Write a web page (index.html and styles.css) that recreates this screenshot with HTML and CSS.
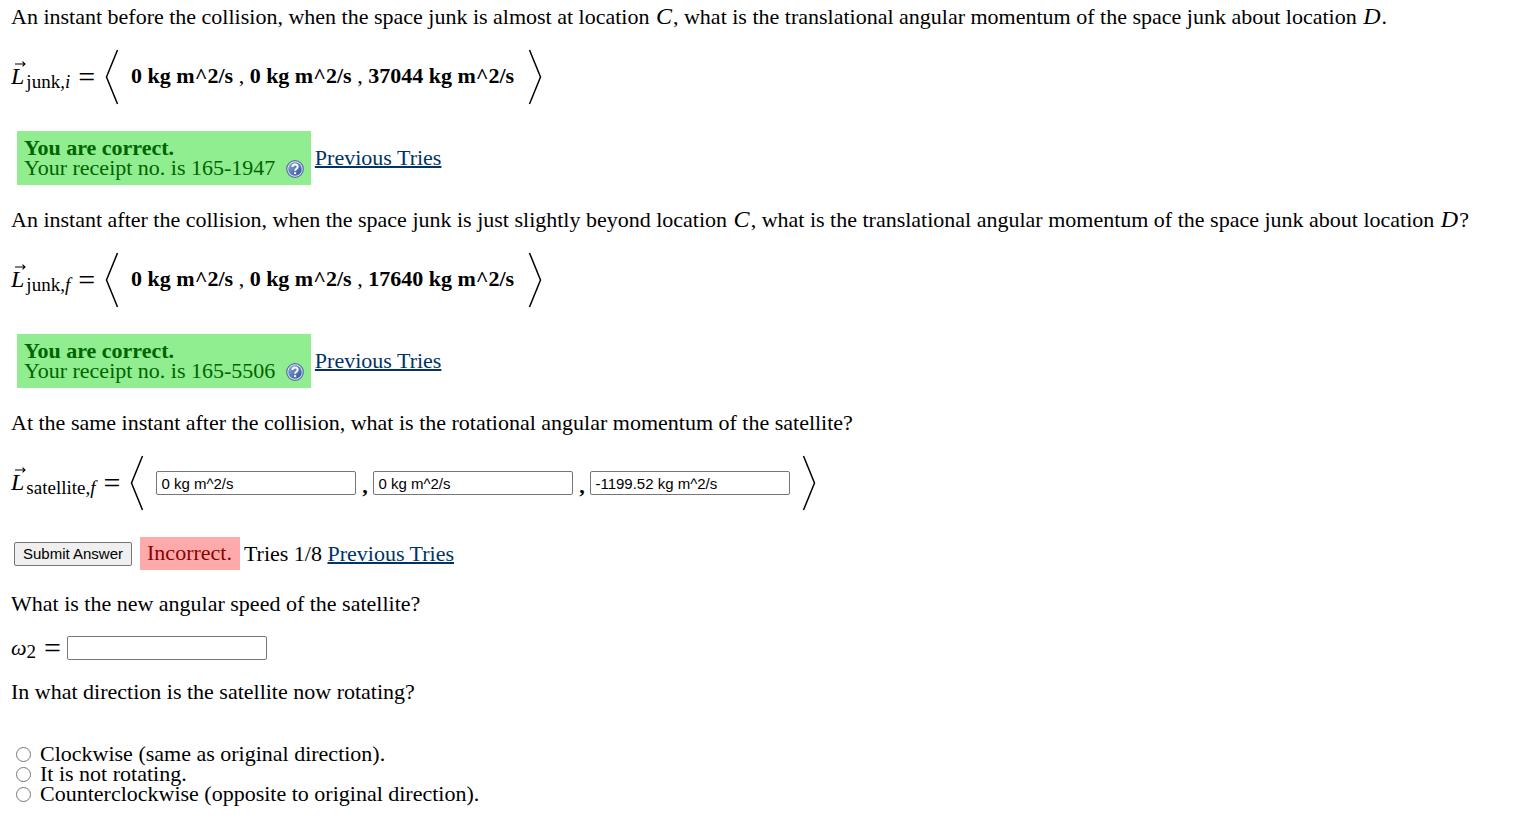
FILE: index.html
```html
<!DOCTYPE html>
<html lang="en">
<head>
  <meta charset="UTF-8">
  <meta name="viewport" content="width=device-width, initial-scale=1.0">
  <title>Angular Momentum Problem</title>
  <link rel="stylesheet" href="styles.css">
</head>
<body>
  <!-- shared shapes -->
  <svg class="defs" width="0" height="0" aria-hidden="true">
    <defs>
      <linearGradient id="helpFill" x1="0" y1="0" x2="1" y2="1">
        <stop offset="0" stop-color="#8fa9d8"/>
        <stop offset="1" stop-color="#2c4f9c"/>
      </linearGradient>
      <symbol id="left" viewBox="0 0 14 56">
        <path d="M12.5 1 L1.5 28 L12.5 55" fill="none" stroke="#000" stroke-width="1.5"/>
      </symbol>
      <symbol id="right" viewBox="0 0 14 56">
        <path d="M1.5 1 L12.5 28 L1.5 55" fill="none" stroke="#000" stroke-width="1.5"/>
      </symbol>
      <symbol id="arrow" viewBox="0 0 11 6">
        <path d="M0 3 H10 M7.5 0.7 L10 3 L7.5 5.3" fill="none" stroke="#000" stroke-width="1.1"/>
      </symbol>
      <symbol id="help" viewBox="0 0 18 18">
        <circle cx="9" cy="9" r="8.3" fill="#dfe6f3" stroke="#5a70a4" stroke-width="1.2"/>
        <circle cx="9" cy="9" r="6.8" fill="url(#helpFill)"/>
        <path d="M6.4 7 C6.4 3.7 11.7 3.7 11.7 6.8 C11.7 8.8 9.1 8.7 9.1 10.8" fill="none" stroke="#fff" stroke-width="1.9"/>
        <circle cx="9.1" cy="13.1" r="1.2" fill="#fff"/>
      </symbol>
    </defs>
  </svg>

  <form onsubmit="return false">
    <p>An instant before the collision, when the space junk is almost at location <i class="var">C</i>, what is the translational angular momentum of the space junk about location <i class="var">D</i>.</p>

    <div class="formula">
      <span class="vec"><i>L</i><svg class="arrow"><use href="#arrow"/></svg></span><span class="sub">junk,<i>i</i></span>
      <span class="eq">=</span>
      <svg class="angle"><use href="#left"/></svg>
      <span class="answer"><b>0 kg m^2/s</b> , <b>0 kg m^2/s</b> , <b>37044 kg m^2/s</b></span>
      <svg class="angle"><use href="#right"/></svg>
    </div>

    <div class="status">
      <div class="correct">
        <b>You are correct.</b><br>
        Your receipt no. is 165-1947 <svg class="help"><use href="#help"/></svg>
      </div>
      <a href="#">Previous Tries</a>
    </div>

    <p>An instant after the collision, when the space junk is just slightly beyond location <i class="var">C</i>, what is the translational angular momentum of the space junk about location <i class="var">D</i>?</p>

    <div class="formula">
      <span class="vec"><i>L</i><svg class="arrow"><use href="#arrow"/></svg></span><span class="sub">junk,<i>f</i></span>
      <span class="eq">=</span>
      <svg class="angle"><use href="#left"/></svg>
      <span class="answer"><b>0 kg m^2/s</b> , <b>0 kg m^2/s</b> , <b>17640 kg m^2/s</b></span>
      <svg class="angle"><use href="#right"/></svg>
    </div>

    <div class="status">
      <div class="correct">
        <b>You are correct.</b><br>
        Your receipt no. is 165-5506 <svg class="help"><use href="#help"/></svg>
      </div>
      <a href="#">Previous Tries</a>
    </div>

    <p>At the same instant after the collision, what is the rotational angular momentum of the satellite?</p>

    <div class="formula">
      <span class="vec"><i>L</i><svg class="arrow"><use href="#arrow"/></svg></span><span class="sub">satellite,<i>f</i></span>
      <span class="eq">=</span>
      <svg class="angle"><use href="#left"/></svg>
      <span class="fields">
        <input type="text" aria-label="x component" value="0 kg m^2/s">
        <b class="comma">,</b>
        <input type="text" aria-label="y component" value="0 kg m^2/s">
        <b class="comma">,</b>
        <input type="text" aria-label="z component" value="-1199.52 kg m^2/s">
      </span>
      <svg class="angle"><use href="#right"/></svg>
    </div>

    <div class="status submit-row">
      <button type="submit">Submit Answer</button>
      <span class="incorrect">Incorrect.</span>
      <span>Tries 1/8 <a href="#">Previous Tries</a></span>
    </div>

    <p>What is the new angular speed of the satellite?</p>

    <div class="omega">
      <label for="omega"><i>ω</i><span class="sub">2</span></label>
      <span class="eq">=</span>
      <input id="omega" type="text">
    </div>

    <p>In what direction is the satellite now rotating?</p>

    <div class="choices">
      <label><input type="radio" name="direction"> Clockwise (same as original direction).</label>
      <label><input type="radio" name="direction"> It is not rotating.</label>
      <label><input type="radio" name="direction"> Counterclockwise (opposite to original direction).</label>
    </div>
  </form>
</body>
</html>
```
FILE: styles.css
```css
body {
  margin: 7px 11px 0;
  background: #fff;
  color: #000;
  font-family: "Liberation Serif", "Times New Roman", serif;
  font-size: 22px;
  line-height: 20px;
}

p {
  margin: 0;
}

a {
  color: #003366;
  text-decoration-thickness: 2px;
}

.defs {
  position: absolute;
}

.var {
  padding: 0 1px;
  font-size: 24px;
  line-height: 0;
}

/* vector equations */
.formula {
  display: flex;
  align-items: center;
  height: 56px;
  margin: 22px 0 26px;
}

.vec {
  position: relative;
  padding: 0 2px 2px 0;
  font-size: 24px;
}

.vec .arrow {
  position: absolute;
  left: 4px;
  top: -5px;
  width: 11px;
  height: 6px;
}

.sub {
  font-size: 19px;
  padding-top: 9px;
}

.eq {
  font-size: 30px;
  margin: 0 10px 0 8px;
}

.angle {
  width: 14px;
  height: 56px;
}

.answer {
  margin: 0 14px 2px 12px;
}

.fields {
  display: flex;
  align-items: center;
  margin: 0 12px;
}

.comma {
  width: 17px;
  padding-top: 6px;
  text-align: center;
}

input[type="text"] {
  box-sizing: border-box;
  width: 200px;
  height: 24px;
  padding: 1px 4px;
  border: 1px solid #767676;
  border-radius: 2px;
  background: #fff;
  font-family: "Liberation Sans", Arial, sans-serif;
  font-size: 15px;
}

/* result messages */
.status {
  display: flex;
  align-items: center;
  gap: 4px;
  margin: 0 0 25px 6px;
}

.correct {
  padding: 7px;
  background: #90ee90;
  color: #006400;
}

.help {
  width: 18px;
  height: 18px;
  margin: -4px 0 -4px 5px;
  vertical-align: 1px;
}

.submit-row {
  margin-left: 3px;
  margin-bottom: 24px;
}

button {
  height: 24px;
  margin-right: 4px;
  padding: 1px 8px;
  border: 1px solid #767676;
  border-radius: 2px;
  background: #efefef;
  color: #000;
  font-family: "Liberation Sans", Arial, sans-serif;
  font-size: 15px;
}

.incorrect {
  padding: 6px 8px 7px 7px;
  background: #ffaaaa;
  color: #8b0000;
}

.omega {
  display: flex;
  align-items: center;
  margin: 22px 0;
}

.omega .sub {
  vertical-align: -3px;
  line-height: 0;
}

.omega .eq {
  margin-right: 6px;
}

.choices {
  display: flex;
  flex-direction: column;
  margin-top: 42px;
  padding-bottom: 8px;
}

.choices label {
  display: flex;
  align-items: center;
}

input[type="radio"] {
  width: 15px;
  height: 15px;
  margin: 0 9px 0 5px;
}
```
